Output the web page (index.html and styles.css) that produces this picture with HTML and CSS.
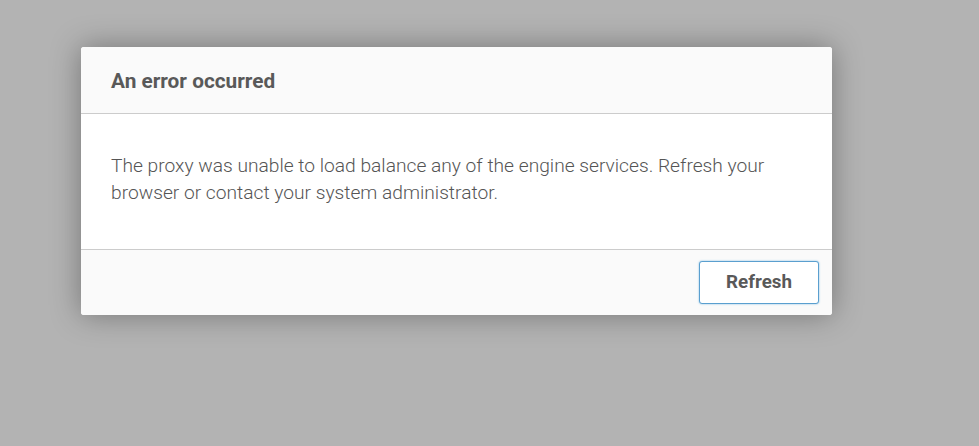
FILE: index.html
```html
<!DOCTYPE html>
<html>
<head>
<meta charset="utf-8">
<link rel="stylesheet" href="styles.css">
</head>
<body>
<div class="stage">
  <div class="dialog">
    <div class="dialog-header"><h1 class="title">An error occurred</h1></div>
    <div class="dialog-body">
      <p class="message">The proxy was unable to load balance any of the engine services. Refresh your browser or contact your system administrator.</p>
    </div>
    <div class="dialog-footer"><button class="btn">Refresh</button></div>
  </div>
</div>
</body>
</html>
```
FILE: styles.css
```css
html, body {
  margin: 0;
  padding: 0;
  height: 100%;
  background: #b3b3b3;
  font-family: Roboto, "Liberation Sans", sans-serif;
}
.stage {
  padding: 47px 0 0 81px;
}
.dialog {
  width: 751px;
  background: #ffffff;
  border-radius: 3px;
  box-shadow: 0 0 30px rgba(0,0,0,0.35);
  overflow: hidden;
}
.dialog-header {
  height: 66px;
  background: #fafafa;
  border-bottom: 1px solid #cccccc;
  padding: 0 30px;
  display: flex;
  align-items: center;
}
.title {
  margin: 0;
  font-size: 20.8px;
  font-weight: 700;
  color: #595959;
  padding-top: 2px;
}
.dialog-body {
  height: 136px;
  border-bottom: 1px solid #cccccc;
  padding: 0 30px;
  box-sizing: border-box;
  padding-top: 38px;
}
.message {
  margin: 0;
  max-width: 680px;
  font-size: 19.2px;
  line-height: 27px;
  font-weight: 300;
  color: #555555;
}
.dialog-footer {
  height: 65px;
  background: #fafafa;
  display: flex;
  justify-content: flex-end;
  align-items: center;
  padding: 0 13px;
}
.btn {
  width: 120px;
  height: 43px;
  margin-top: -1px;
  background: #ffffff;
  border: 1px solid #5a9fcf;
  border-radius: 3px;
  box-shadow: 0 0 2px #7ab8e0;
  font-family: inherit;
  font-size: 18.8px;
  font-weight: 700;
  color: #595959;
}
```
